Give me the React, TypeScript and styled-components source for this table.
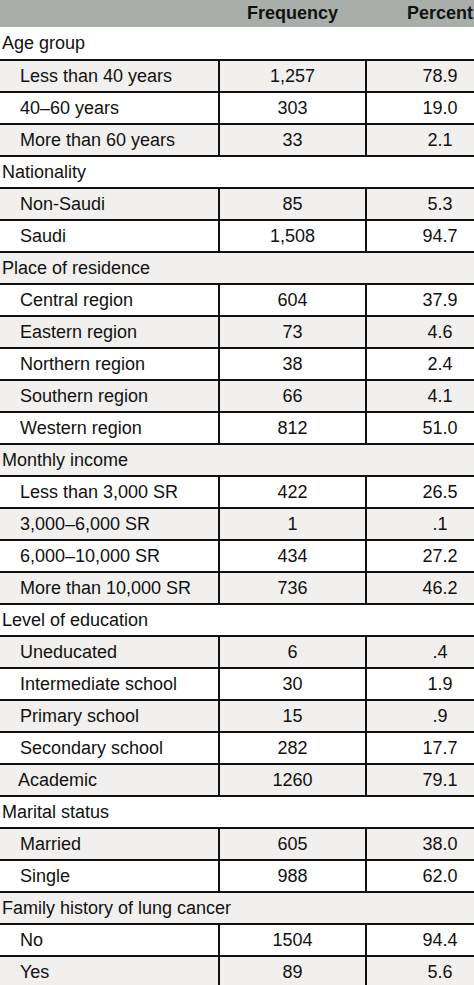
import React from 'react';
import styled, { createGlobalStyle } from 'styled-components';

interface Item {
  label: string;
  freq: string;
  pct: string;
  indent?: number;
}

interface Group {
  title: string;
  items: Item[];
}

const groups: Group[] = [
  {
    title: 'Age group',
    items: [
      { label: 'Less than 40 years', freq: '1,257', pct: '78.9' },
      { label: '40–60 years', freq: '303', pct: '19.0' },
      { label: 'More than 60 years', freq: '33', pct: '2.1' },
    ],
  },
  {
    title: 'Nationality',
    items: [
      { label: 'Non-Saudi', freq: '85', pct: '5.3' },
      { label: 'Saudi', freq: '1,508', pct: '94.7' },
    ],
  },
  {
    title: 'Place of residence',
    items: [
      { label: 'Central region', freq: '604', pct: '37.9' },
      { label: 'Eastern region', freq: '73', pct: '4.6' },
      { label: 'Northern region', freq: '38', pct: '2.4' },
      { label: 'Southern region', freq: '66', pct: '4.1' },
      { label: 'Western region', freq: '812', pct: '51.0' },
    ],
  },
  {
    title: 'Monthly income',
    items: [
      { label: 'Less than 3,000 SR', freq: '422', pct: '26.5' },
      { label: '3,000–6,000 SR', freq: '1', pct: '.1' },
      { label: '6,000–10,000 SR', freq: '434', pct: '27.2' },
      { label: 'More than 10,000 SR', freq: '736', pct: '46.2' },
    ],
  },
  {
    title: 'Level of education',
    items: [
      { label: 'Uneducated', freq: '6', pct: '.4' },
      { label: 'Intermediate school', freq: '30', pct: '1.9' },
      { label: 'Primary school', freq: '15', pct: '.9' },
      { label: 'Secondary school', freq: '282', pct: '17.7' },
      { label: 'Academic', freq: '1260', pct: '79.1', indent: 18 },
    ],
  },
  {
    title: 'Marital status',
    items: [
      { label: 'Married', freq: '605', pct: '38.0' },
      { label: 'Single', freq: '988', pct: '62.0' },
    ],
  },
  {
    title: 'Family history of lung cancer',
    items: [
      { label: 'No', freq: '1504', pct: '94.4' },
      { label: 'Yes', freq: '89', pct: '5.6' },
    ],
  },
];

const GlobalStyle = createGlobalStyle`
  body {
    margin: 0;
    background: #ffffff;
    font-family: 'Liberation Sans', Arial, sans-serif;
    color: #111111;
  }
`;

const Table = styled.div`
  width: 474px;
  display: flex;
  flex-direction: column;
`;

const HeaderRow = styled.div`
  height: 27px;
  display: grid;
  grid-template-columns: 220px 147px 1fr;
  align-items: center;
  background: #aaaeaa;
  font-size: 18px;
  font-weight: bold;
`;

const HeadCell = styled.div<{ $pct?: boolean }>`
  text-align: center;
  padding-right: ${(p) => (p.$pct ? '0' : '2px')};
  padding-left: ${(p) => (p.$pct ? '39px' : '0')};
`;

const Row = styled.div<{ $shaded: boolean; $first?: boolean }>`
  box-sizing: border-box;
  height: 32px;
  display: grid;
  grid-template-columns: 220px 147px 1fr;
  background: ${(p) => (p.$shaded ? '#f1f0ee' : '#ffffff')};
  border-top: ${(p) => (p.$first ? 'none' : '2px solid #111111')};
  font-size: 18px;
`;

const TitleCell = styled.div`
  grid-column: 1 / -1;
  display: flex;
  align-items: center;
  padding-left: 2px;
`;

const LabelCell = styled.div<{ $indent: number }>`
  box-sizing: border-box;
  display: flex;
  align-items: center;
  padding-left: ${(p) => p.$indent}px;
  border-right: 2px solid #111111;
`;

const FreqCell = styled.div`
  box-sizing: border-box;
  display: flex;
  align-items: center;
  justify-content: center;
  border-right: 2px solid #111111;
`;

const PctCell = styled.div`
  display: flex;
  align-items: center;
  justify-content: center;
  padding-left: 39px;
`;

export default function App() {
  let index = 0;
  const rows: React.ReactNode[] = [];
  groups.forEach((g) => {
    const i = index++;
    rows.push(
      <Row key={`g${i}`} $shaded={i % 2 === 1} $first={i === 0}>
        <TitleCell>{g.title}</TitleCell>
      </Row>
    );
    g.items.forEach((it) => {
      const j = index++;
      rows.push(
        <Row key={`r${j}`} $shaded={j % 2 === 1}>
          <LabelCell $indent={it.indent ?? 20}>{it.label}</LabelCell>
          <FreqCell>{it.freq}</FreqCell>
          <PctCell>{it.pct}</PctCell>
        </Row>
      );
    });
  });

  return (
    <>
      <GlobalStyle />
      <Table>
        <HeaderRow>
          <HeadCell />
          <HeadCell>Frequency</HeadCell>
          <HeadCell $pct>Percent</HeadCell>
        </HeaderRow>
        {rows}
      </Table>
    </>
  );
}
